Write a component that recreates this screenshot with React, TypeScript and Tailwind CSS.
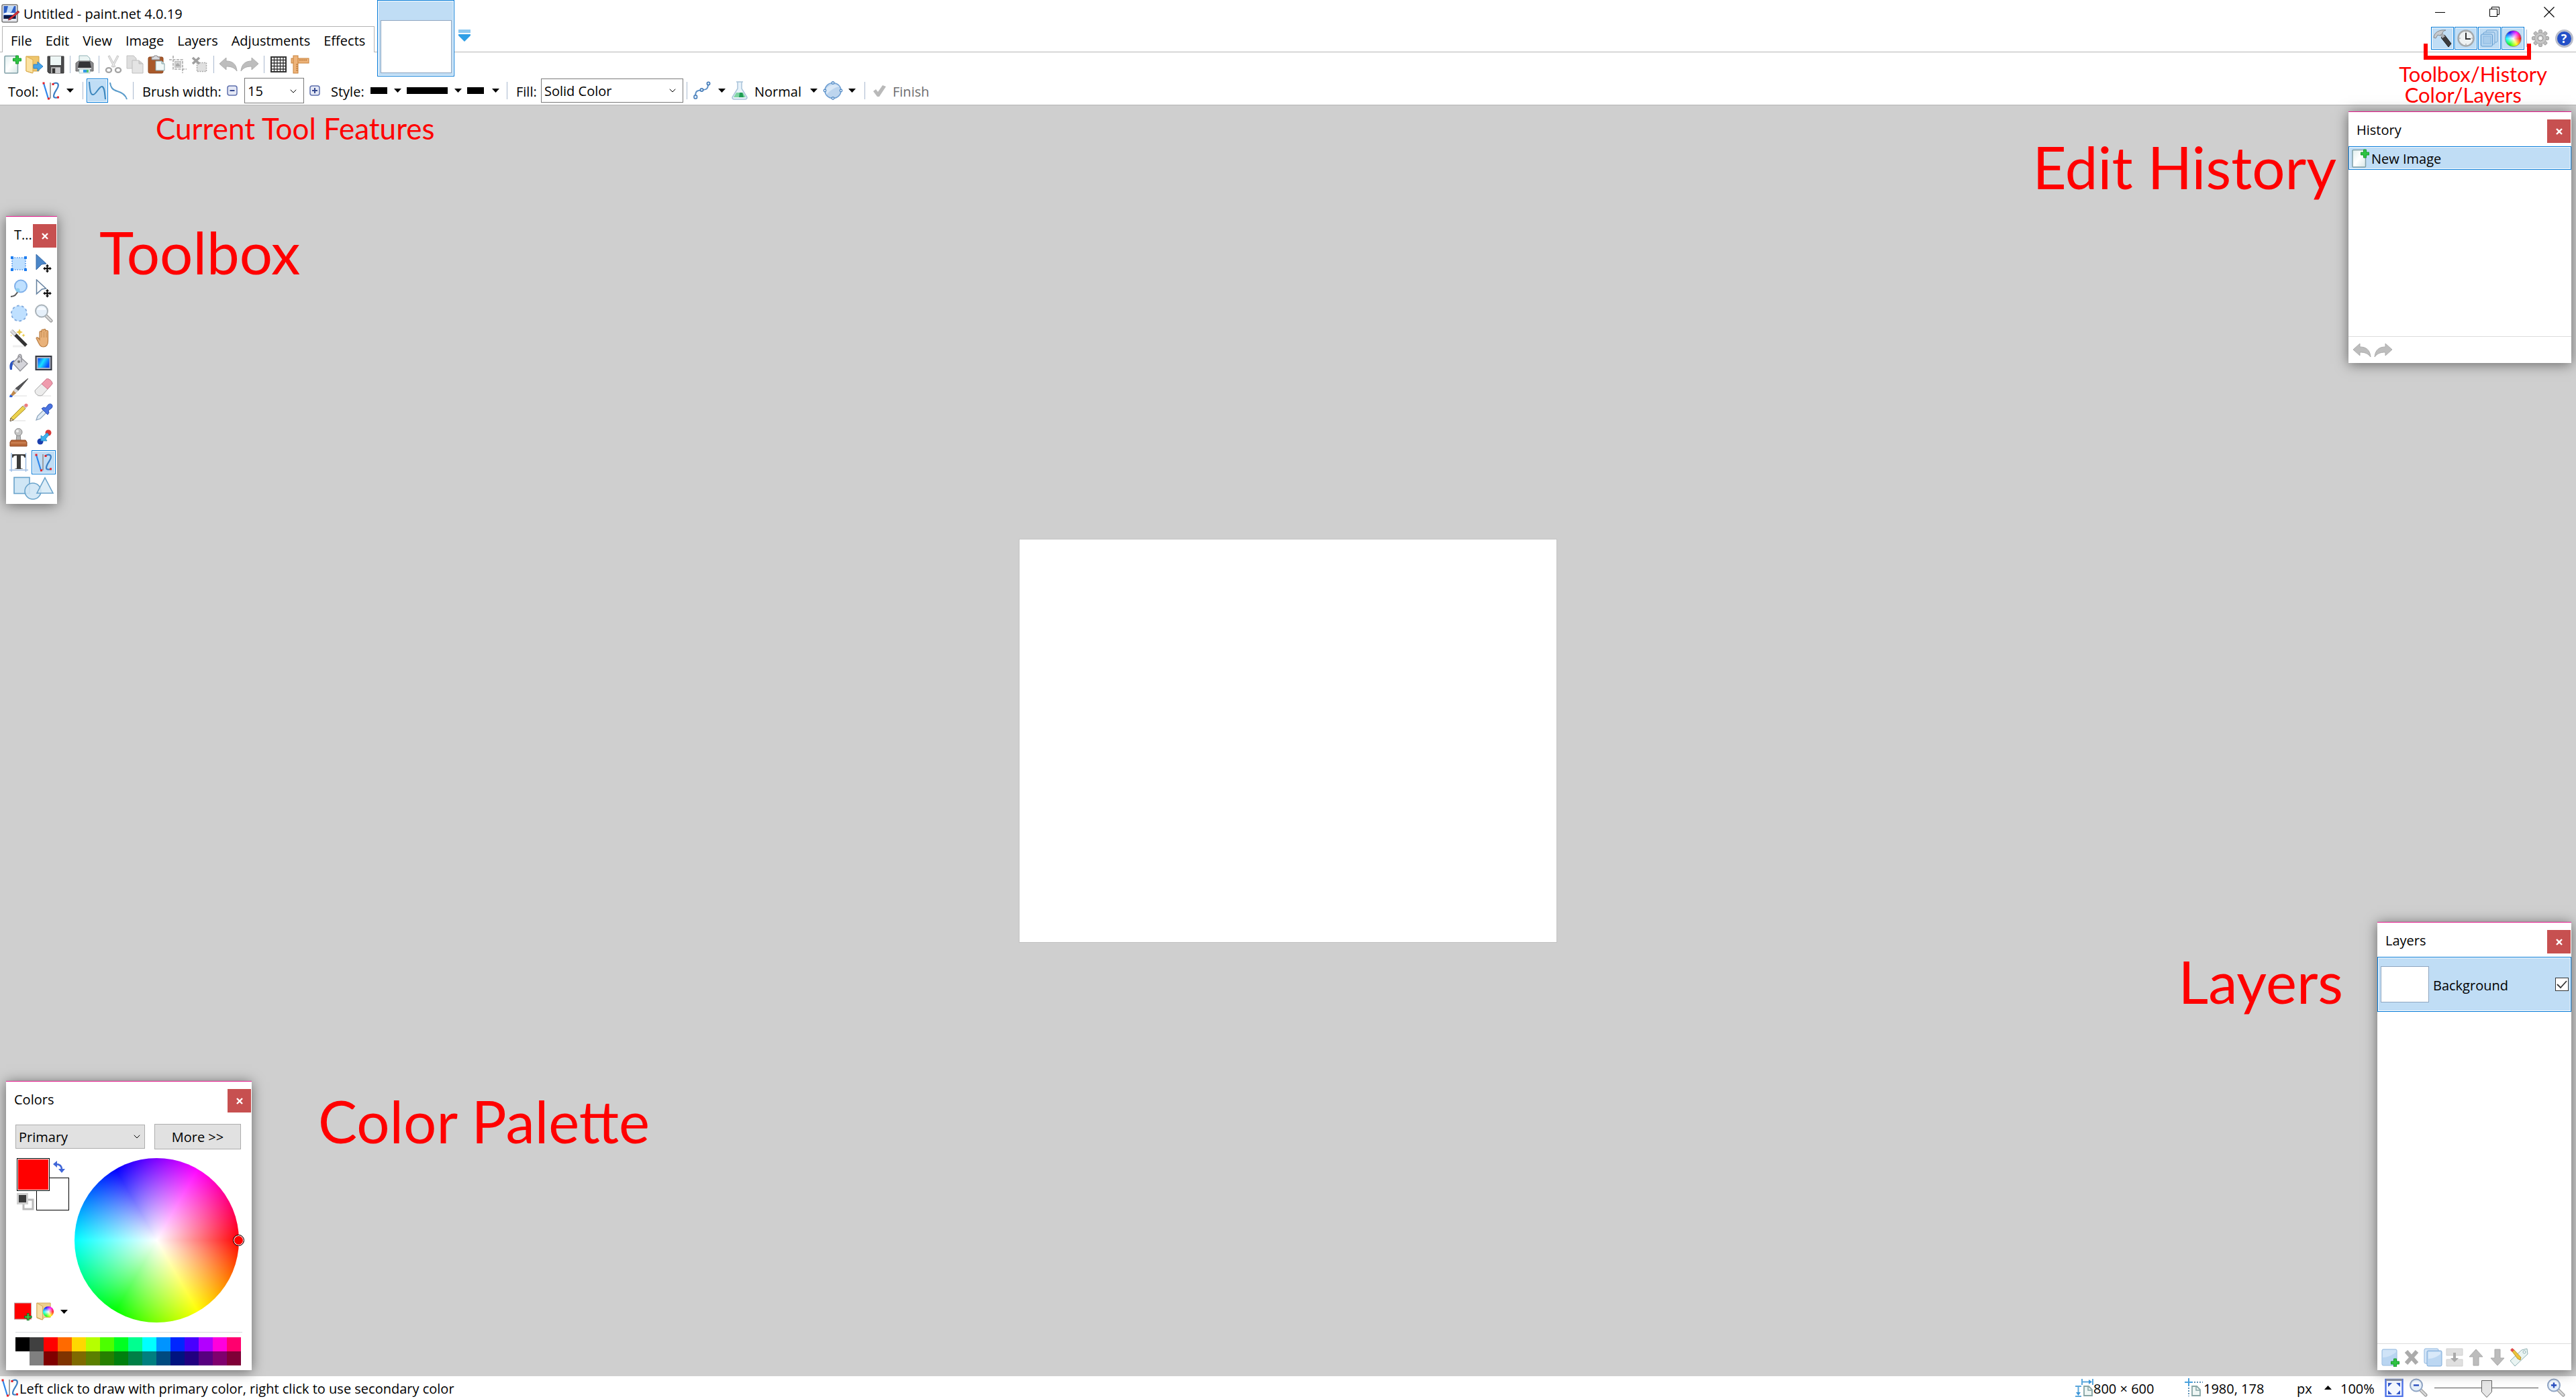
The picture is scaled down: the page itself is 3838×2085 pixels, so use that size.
import type { ReactNode } from 'react';
import { ChevronDown } from 'lucide-react';

/* ---------- icon helpers ---------- */

type IconProps = { children: ReactNode; className?: string; box?: string };

function Svg({ children, className = 'size-7', box = '0 0 28 28' }: IconProps) {
  return (
    <svg viewBox={box} className={`${className} shrink-0`} fill="none" aria-hidden="true">
      {children}
    </svg>
  );
}

const plus = (x: number, y: number) => (
  <path
    d={`M${x - 2} ${y - 6}h4v4h4v4h-4v4h-4v-4h-4v-4h4z`}
    fill="#2fc443"
    stroke="#179a2c"
    strokeWidth="1"
  />
);

const NewIcon = () => (
  <Svg>
    <defs>
      <linearGradient id="page" x1="0" y1="0" x2="1" y2="1">
        <stop offset="0" stopColor="#dfeeee" />
        <stop offset="0.5" stopColor="#fff" />
        <stop offset="1" stopColor="#d6e6e6" />
      </linearGradient>
    </defs>
    <rect x="2" y="1.500" width="19.500" height="25.500" rx="1" fill="url(#page)" stroke="#7f9fa6" strokeWidth="1.500" />
    {plus(20.5, 7)}
  </Svg>
);

const OpenIcon = () => (
  <Svg>
    <path d="M2 2h19v22h-9l-1 3-9-3z" fill="#efc66d" stroke="#d3a13f" />
    <path d="M2 2l10 5v20l-10-3z" fill="#fbe2a2" stroke="#d9ab4d" />
    <path d="M13 14h6v-4l8 7-8 7v-4h-6z" fill="#46a4ea" stroke="#2b7fc6" />
  </Svg>
);

const SaveIcon = () => (
  <Svg>
    <path d="M2 2h24v25H4l-2-2z" fill="#4a4a4c" stroke="#333" />
    <rect x="6" y="2" width="16" height="13" fill="#edf6f5" />
    <path d="M7 18h14v9H7z" fill="#aaa" />
    <rect x="9" y="20" width="4" height="7" fill="#333" />
    <rect x="14" y="19" width="7" height="8" fill="#c9c9cb" />
  </Svg>
);

const PrintIcon = () => (
  <Svg>
    <path d="M6 10V1h12l4 4v6z" fill="#eaf4f3" stroke="#8fb0b4" />
    <path d="M1 12l4-3h18l4 3v12H1z" fill="#8b8b8e" stroke="#666" />
    <path d="M6 10h16l2 9H4z" fill="#333336" />
    <rect x="4" y="19" width="20" height="2" fill="#d8d8da" />
    <path d="M6 21h16v6H6z" fill="#eef6f6" stroke="#9bb" strokeWidth="0.700" />
    <path d="M12 22h5v4h-5z" fill="#3498e8" />
    <path d="M17 22h3v4h-3z" fill="#58c470" />
  </Svg>
);

const CutIcon = () => (
  <Svg>
    <path d="M7 1l9 17M21 1l-9 17" stroke="#c9c9c9" strokeWidth="3.400" />
    <path d="M7.500 2l8 15M20.500 2l-8 15" stroke="#e9e9e9" strokeWidth="1.400" />
    <ellipse cx="7" cy="22.500" rx="4" ry="3.400" stroke="#a3a3a3" strokeWidth="2.400" />
    <ellipse cx="21" cy="22.500" rx="4" ry="3.400" stroke="#a3a3a3" strokeWidth="2.400" />
  </Svg>
);

const CopyIcon = () => (
  <Svg>
    <path d="M2 1h10l4 4v15H2z" fill="#dedede" stroke="#c2c2c2" />
    <path d="M10 8h10l6 5v14H10z" fill="#e4e4e4" stroke="#bebebe" />
    <path d="M20 8v5h6" fill="#cfcfcf" stroke="#bebebe" />
  </Svg>
);

const PasteIcon = () => (
  <Svg>
    <rect x="2" y="3" width="22" height="24" rx="2" fill="#a9592a" stroke="#8a441c" />
    <path d="M7 7V3h3l1-2h4l1 2h3v4z" fill="#d9d9dc" stroke="#86868a" />
    <path d="M13 9h9l4 4v10H13z" fill="#f0f8f7" stroke="#83a3a8" />
    <path d="M22 9v4h4" fill="#cfe0e0" stroke="#83a3a8" />
  </Svg>
);

const CropIcon = () => (
  <Svg>
    <path d="M7 1v20h20M1 7h20v20" stroke="#a8a8a8" strokeWidth="1.600" strokeDasharray="4 1.500" />
    <rect x="9.500" y="9.500" width="9" height="9" fill="#d2d2d2" stroke="#bbb" />
    <path d="M11 17v-3l3-2 3 3v2z" fill="#aaa" />
  </Svg>
);

const DeselectIcon = () => (
  <Svg>
    <rect x="10.500" y="11.500" width="14" height="13" fill="#e0e0e0" stroke="#a8a8a8" strokeWidth="1.500" strokeDasharray="2 1.500" />
    <path d="M4 4l10 9M14 4L4 13" stroke="#9f9f9f" strokeWidth="3.600" />
  </Svg>
);

const UndoIcon = () => (
  <Svg>
    <path d="M1 13L11 4v5c9 0 15 4 16 15-4-5-8-7-16-7v5z" fill="#bdbdbd" stroke="#adadad" />
  </Svg>
);

const RedoIcon = () => (
  <Svg>
    <path d="M27 13L17 4v5C8 9 2 13 1 24c4-5 8-7 16-7v5z" fill="#bdbdbd" stroke="#adadad" />
  </Svg>
);

const GridIcon = () => (
  <Svg>
    <rect x="3" y="3" width="22" height="22" fill="#fff" stroke="#333" strokeWidth="2" />
    <path d="M7.500 3v22M12 3v22M16.500 3v22M21 3v22M3 7.500h22M3 12h22M3 16.500h22M3 21h22" stroke="#333" strokeWidth="1.300" />
  </Svg>
);

const RulerIcon = () => (
  <Svg>
    <rect x="1" y="5" width="26" height="7" fill="#eeb47a" stroke="#c7813b" />
    <rect x="4" y="1" width="7" height="26" fill="#eeb47a" stroke="#c7813b" />
    <path d="M14 6v3M17 6v3M20 6v3M23 6v3M8 14h3M8 17h3M8 20h3M8 23h3" stroke="#b06a28" />
  </Svg>
);

const LineToolIcon = () => (
  <Svg>
    <path d="M3 3l7 23" stroke="#2f86ea" strokeWidth="2.200" />
    <path d="M13 2v24" stroke="#999" strokeWidth="1.800" />
    <path d="M17 4c5-3 9-1 7.500 4-1 4-6 8-6.500 14 0 3 3 3 7 2" stroke="#3b7fc4" strokeWidth="2.200" />
    <path d="M1.500 1.500h3v3h-3zM9 24.500h3v3H9zM15.500 3h3v3h-3zM23 22.500h3v3h-3z" fill="#e8222a" />
  </Svg>
);

const SplineIcon = () => (
  <Svg>
    <path d="M2 1C3 14 4 21 8 20c4 0 9-13 13-12 4 1 4 10 5 19" stroke="#3b86bd" strokeWidth="2" />
  </Svg>
);

const BezierIcon = () => (
  <Svg>
    <path d="M1 2c1 8 4 11 11 13s12 5 14 12" stroke="#5b9ccb" strokeWidth="2" />
  </Svg>
);

const MinusBoxIcon = () => (
  <Svg className="size-4" box="0 0 16 16">
    <rect x="1" y="1" width="14" height="14" rx="3" fill="#e4e8f5" stroke="#5f70ad" strokeWidth="1.500" />
    <path d="M4.500 8h7" stroke="#34488f" strokeWidth="2" />
  </Svg>
);

const PlusBoxIcon = () => (
  <Svg className="size-4" box="0 0 16 16">
    <rect x="1" y="1" width="14" height="14" rx="3" fill="#e4e8f5" stroke="#5f70ad" strokeWidth="1.500" />
    <path d="M4 8h8M8 4v8" stroke="#34488f" strokeWidth="2" />
  </Svg>
);

const CurveTypeIcon = () => (
  <Svg>
    <path d="M4 23c0-9 3-9 9-10 8 0 10-2 10-9" stroke="#5b8fc6" strokeWidth="2" />
    <rect x="2" y="21" width="4.500" height="5" rx="1.500" fill="#dcebfa" stroke="#3e76b4" strokeWidth="1.500" />
    <circle cx="13.500" cy="13" r="2.200" fill="#dcebfa" stroke="#3e76b4" strokeWidth="1.500" />
    <circle cx="23.500" cy="3.500" r="2.200" fill="#dcebfa" stroke="#3e76b4" strokeWidth="1.500" />
  </Svg>
);

const FlaskIcon = () => (
  <Svg>
    <path d="M9 1h10M11 1v10L3 24c0 2 1 3 3 3h16c2 0 3-1 3-3l-8-13V1" fill="#e8f2fa" stroke="#a9c4da" strokeWidth="1.500" />
    <path d="M9 17h10l4 7H5z" fill="#7fd4a2" />
    <path d="M14 17h4l2 7h-7z" fill="#1f9d55" />
  </Svg>
);

const SelectionShapeIcon = () => (
  <Svg className="h-7 w-[30px]" box="0 0 30 28">
    <ellipse cx="15" cy="14" rx="12" ry="11.500" fill="#bdd5ee" stroke="#6f9fd2" strokeWidth="1.600" />
    <path d="M5 11c4-6 14-8 20-3-6 0-14 6-20 12z" fill="#d9e8f7" />
    {[[15, 2.5], [27, 14], [15, 25.5], [3, 14]].map(([x, y]) => (
      <circle key={`${x}-${y}`} cx={x} cy={y} r="1.800" fill="#e6f1fb" stroke="#4d86c2" strokeWidth="1.200" />
    ))}
  </Svg>
);

const CheckIcon = () => (
  <Svg className="size-6" box="0 0 24 24">
    <path d="M3 13l4-3 3 4 7-10 5 2-10 15h-3z" fill="#b9b9b9" />
  </Svg>
);

const Caret = ({ up = false }: { up?: boolean }) => (
  <Svg className="h-[6px] w-[11px]" box="0 0 11 6">
    <path d={up ? 'M0 6h11L5.500 0z' : 'M0 0h11L5.500 6z'} fill="#000" />
  </Svg>
);

const HammerIcon = () => (
  <Svg>
    <path d="M12 13l5-4 10 13-4 5z" fill="#3c3c3f" stroke="#222" />
    <path d="M8 7l6-1 4 5-4 3z" fill="#a9adb2" />
    <path d="M1 13c1-8 8-12 18-11-3 1-5 2-5 5l-4 3-3-1-3 5-3-1z" fill="#c7cace" stroke="#83888e" />
  </Svg>
);

const ClockIcon = () => (
  <Svg>
    <circle cx="14" cy="14" r="11.500" fill="#eef1f2" stroke="#a4a9ac" strokeWidth="2.400" />
    <path d="M14 6v9h7" stroke="#333" strokeWidth="2" />
    <path d="M14 4.500v1M14 22.500v1M4.500 14h1M22.500 14h1" stroke="#777" strokeWidth="1.500" />
  </Svg>
);

const LayersIcon = () => (
  <Svg>
    <rect x="9" y="2" width="17" height="18" rx="2" fill="#bcd9f2" stroke="#72a7d6" />
    <rect x="5" y="5" width="17" height="18" rx="2" fill="#bcd9f2" stroke="#72a7d6" />
    <rect x="1.500" y="8" width="17" height="18" rx="2" fill="#b5d5f0" stroke="#5f9bd0" />
    <rect x="5" y="11" width="11" height="11" fill="#a9cdec" stroke="#8ab9e2" />
  </Svg>
);

const GearIcon = () => (
  <Svg>
    {[0, 45, 90, 135].map((a) => (
      <rect key={a} x="11.500" y="1.500" width="5" height="25" rx="1.500" fill="#bdbdbd" stroke="#909090" strokeWidth="0.800" transform={`rotate(${a} 14 14)`} />
    ))}
    <circle cx="14" cy="14" r="8.500" fill="#c6c6c6" stroke="#a2a2a2" strokeWidth="0.800" />
    <circle cx="14" cy="14" r="4" fill="#e4e4e4" stroke="#8c8c8c" />
    <circle cx="14" cy="14" r="1.600" fill="#fff" />
  </Svg>
);

const AppIcon = () => (
  <Svg>
    <rect x="1" y="1" width="23" height="26" rx="2" fill="#e6e8ee" stroke="#777" strokeWidth="1.500" />
    <rect x="3.500" y="3" width="18" height="19" fill="#2e5fc4" />
    <path d="M10 3h9l-4 9-8 3z" fill="#bcd8f8" />
    <path d="M3.500 14c5-3 12 0 18-1v3h-18z" fill="#fff" />
    <path d="M3.500 17h18v5h-18z" fill="#0e1a44" />
    <path d="M25 10l2 2-13 11-4 1 2-3z" fill="#d9303a" stroke="#6b1519" strokeWidth="0.700" />
  </Svg>
);

/* toolbox */

const RectSelectIcon = () => (
  <Svg>
    <rect x="4" y="5" width="20" height="18" fill="#bfe0ff" stroke="#4a8fe8" strokeWidth="1.600" strokeDasharray="1.500 2" />
    <path d="M2 3h4v4H2zM22 3h4v4h-4zM2 21h4v4H2zM22 21h4v4h-4z" fill="#1d7df0" />
  </Svg>
);

const moveCross = (
  <path
    d="M19 13l3.500 4h-2v3h3v-2l4 3.500-4 3.500v-2h-3v3h2L19 30l-3.500-4h2v-3h-3v2l-4-3.500 4-3.500v2h3v-3h-2z"
    transform="translate(5.250 5) scale(0.750)"
    fill="#111"
  />
);

const MovePixelsIcon = () => (
  <Svg>
    <path d="M3 0l15 14-7 1-8 8z" fill="#4b86c8" stroke="#3569a8" />
    {moveCross}
  </Svg>
);

const MoveSelectionIcon = () => (
  <Svg>
    <path d="M3.500 1l14 13-6 1-8 7z" fill="#fff" stroke="#64809f" strokeWidth="1.500" />
    {moveCross}
  </Svg>
);

const LassoIcon = () => (
  <Svg>
    <ellipse cx="17" cy="10.500" rx="9" ry="9" fill="#bfe0ff" stroke="#7fb0ea" strokeWidth="2" />
    <path d="M13 17c-2 6-6 9-11 9" stroke="#555" strokeWidth="2" />
    <circle cx="12.500" cy="16.500" r="3" fill="#8ccdee" />
  </Svg>
);

const EllipseSelectIcon = () => (
  <Svg>
    <circle cx="14.500" cy="14" r="11.500" fill="#bfe0ff" stroke="#7fa9dd" strokeWidth="1.800" strokeDasharray="3.500 3.700" />
  </Svg>
);

const Magnifier = ({ mark, color = '#a9b2b8' }: { mark?: string; color?: string }) => (
  <Svg>
    <path d="M17 17l8 8" stroke="#999" strokeWidth="5" strokeLinecap="round" />
    <path d="M17 17l8 8" stroke="#d8d8d8" strokeWidth="2.500" strokeLinecap="round" />
    <circle cx="11" cy="10.500" r="9" fill="#e6f0fa" stroke={color} strokeWidth="2" />
    <path d="M4 9c2-6 12-6 14 0z" fill="#f7fbff" />
    {mark && <path d={mark} stroke="#2a50c0" strokeWidth="2.400" />}
  </Svg>
);

const ZoomToolIcon = () => <Magnifier />;

const WandIcon = () => (
  <Svg>
    <path d="M5 26h20" stroke="#eee" strokeWidth="3" />
    <path d="M3 3L25 25" stroke="#333" strokeWidth="5" />
    <path d="M2.500 2.500l6.500 6.500" stroke="#ddd" strokeWidth="4.500" />
    <path d="M15 0l1.500 3.500L20 5l-3.500 1.500L15 10l-1.500-3.500L10 5l3.500-1.500zM21 7l.8 2 2 .8-2 .8-.8 2-.8-2-2-.8 2-.8zM2 8l.6 1.400L4 10l-1.400.6L2 12z" fill="#e8c846" />
  </Svg>
);

const HandIcon = () => (
  <Svg>
    <path d="M3 14c1-2 3-1 5 2V5c0-2 3-2 3 0V2.500c0-2 3-2 3 0V2c0-2 3-2 3 0v2c0-2 3.500-2 3.500 0v14c0 6-3 9-7 9-5 0-6-4-10.500-13z" fill="#e9b27a" stroke="#b97d43" strokeWidth="1.200" />
    <path d="M11 5v8M14.500 4v9M18 5v8" stroke="#c68b50" />
  </Svg>
);

const BucketIcon = () => (
  <Svg>
    <path d="M1 24c-2-8 1-13 6-14l2 3c-4 1-5 5-5 11z" fill="#2b53c0" />
    <path d="M15 4l12 11-11 11L5 14z" fill="#d4d4da" stroke="#909096" strokeWidth="1.300" />
    <path d="M13 6c0-6 5-6 5 0v7" stroke="#9a9aa0" strokeWidth="1.800" />
    <circle cx="14" cy="12" r="2" fill="#777" />
  </Svg>
);

const GradientIcon = () => (
  <Svg>
    <defs>
      <linearGradient id="grad" x1="0" y1="0" x2="1" y2="0.500">
        <stop offset="0" stopColor="#0a3cff" />
        <stop offset="0.500" stopColor="#19e0ff" />
        <stop offset="1" stopColor="#0a50ff" />
      </linearGradient>
    </defs>
    <rect x="2.500" y="4" width="23" height="20" fill="#a8b0c8" stroke="#33363f" strokeWidth="2" />
    <rect x="5.500" y="7" width="17" height="14" fill="url(#grad)" />
  </Svg>
);

const BrushIcon = () => (
  <Svg>
    <path d="M6 26h20" stroke="#eee" strokeWidth="2" />
    <path d="M28 0L13 18l-4-3z" fill="#55565a" stroke="#444" />
    <path d="M9 15l4 3-4 4-3-3z" fill="#d9dadd" stroke="#999" strokeWidth="0.600" />
    <path d="M6 18l4 4-5 4H1z" fill="#c08a4e" />
    <path d="M1 24l4 2-1 2H0z" fill="#2d62d8" />
  </Svg>
);

const EraserIcon = () => (
  <Svg>
    <path d="M5 26h20" stroke="#eee" strokeWidth="2" />
    <path d="M1 18L18 1c3-2 9 3 9 7L12 25c-4 2-11 0-11-7z" fill="#ececec" stroke="#aaa" />
    <path d="M11 8l7-7c3-2 9 3 9 7l-7 8z" fill="#ef9bad" stroke="#d3778d" />
  </Svg>
);

const PencilIcon = () => (
  <Svg>
    <path d="M6 26h18" stroke="#eee" strokeWidth="2" />
    <path d="M2 22L20 4l4 4L6 25l-5 1z" fill="#ecd24e" stroke="#a48a22" />
    <path d="M2 22l4 3-5 2z" fill="#e6c79b" stroke="#333" strokeWidth="0.600" />
    <path d="M20 4l2-2 4 4-2 2z" fill="#ccc" />
    <circle cx="25" cy="3" r="2.600" fill="#ee7c80" />
  </Svg>
);

const PickerIcon = () => (
  <Svg>
    <path d="M3 25L5 19 14 10l4 4-9 9z" fill="#dfeaf5" stroke="#8ea6bd" strokeWidth="1.300" />
    <path d="M11 8l3-2 3 1 4-5c4-3 8 1 5 5l-5 4 1 3-2 3z" fill="#4a73e0" stroke="#2c4fb4" />
  </Svg>
);

const StampIcon = () => (
  <Svg>
    <path d="M11 10h5l1 9h-7z" fill="#b5b5b5" stroke="#888" />
    <circle cx="13.500" cy="6" r="5.500" fill="#c4c4c4" stroke="#8c8c8c" />
    <circle cx="12" cy="4.500" r="2" fill="#eee" />
    <path d="M3 18h21l2 3v6H1v-6z" fill="#b8683a" stroke="#8d4620" />
    <path d="M2 22h23" stroke="#dc9a6c" />
  </Svg>
);

const RecolorIcon = () => (
  <Svg>
    <circle cx="21" cy="7" r="4.500" fill="#d93a3a" />
    <circle cx="9" cy="20" r="4.500" fill="#1a3fae" />
    <path d="M19 7l3 3-5 6 2 3H10v-8l3 2z" fill="#3fb1ec" stroke="#1f86c4" strokeWidth="0.800" />
  </Svg>
);

const TextIcon = () => (
  <Svg>
    <path d="M3 0v28M24.500 0v28M0 25.500h28" stroke="#9cbce4" strokeWidth="1.500" />
    <path d="M4 2h20v5h-1.500c-.5-2-1.500-3-4-3H17v18c0 1 1 1.500 3 1.500V24H8v-.5c2 0 3-.5 3-1.500V4H9.500c-2.500 0-3.500 1-4 3H4z" fill="#3b3b3b" />
  </Svg>
);

const ShapesIcon = () => (
  <Svg className="h-9 w-[62px]" box="0 0 62 36">
    <rect x="2" y="1.500" width="23" height="24" fill="#cfe6f5" stroke="#69a3cb" strokeWidth="1.600" />
    <circle cx="30" cy="22" r="12" fill="#cfe6f5" fillOpacity="0.900" stroke="#69a3cb" strokeWidth="1.600" />
    <path d="M48 2l12 23H36z" fill="#d6eaf6" fillOpacity="0.850" stroke="#69a3cb" strokeWidth="1.600" />
  </Svg>
);

/* layers footer */

const AddLayerIcon = () => (
  <Svg>
    <rect x="2" y="2" width="22" height="24" rx="2" fill="#cfe3f7" stroke="#8db5dd" />
    <path d="M3 14c7 0 14-3 20-8v19H3z" fill="#b9d5f1" />
    {plus(21.5, 22)}
  </Svg>
);
const DeleteIcon = () => (
  <Svg>
    <path d="M6 5l16 18M22 5L6 23" stroke="#ababab" strokeWidth="6" />
  </Svg>
);
const DuplicateIcon = () => (
  <Svg>
    <rect x="1" y="1" width="21" height="22" rx="2" fill="#d5e6f8" stroke="#8db5dd" />
    <rect x="5" y="4" width="22" height="23" rx="2" fill="#bcd7f2" stroke="#7caad8" />
    <path d="M7 16c7 0 13-3 18-7v-3H7z" fill="#d9e9f9" />
  </Svg>
);
const MergeIcon = () => (
  <Svg>
    <path d="M2 1h24v10H2zM2 17h24v10H2z" fill="#e0e0e0" stroke="#cfcfcf" />
    <path d="M12 7h4v8h4l-6 6-6-6h4z" fill="#aaa" />
  </Svg>
);
const UpIcon = () => (
  <Svg>
    <path d="M14 2l10 11h-6v13h-8V13H4z" fill="#bcbcbc" stroke="#a8a8a8" />
  </Svg>
);
const DownIcon = () => (
  <Svg>
    <path d="M14 26l10-11h-6V2h-8v13H4z" fill="#bcbcbc" stroke="#a8a8a8" />
  </Svg>
);
const PropsIcon = () => (
  <Svg>
    <path d="M18 3l8-2 1 8L8 27l-7-8z" fill="#e9f4f2" stroke="#8fb0b4" />
    <circle cx="22" cy="6" r="2" fill="#fff" stroke="#8fb0b4" />
    <path d="M3 4l3-2 11 12-1 4-4-2z" fill="#edc43c" stroke="#a8851c" strokeWidth="0.800" />
    <path d="M1 3l3-3 3 3-3 3z" fill="#e24b4b" />
  </Svg>
);

/* status bar */

const SizeIcon = () => (
  <Svg>
    <path d="M11 1v9M27 1v9M12 5.500h11M1 12h9M1 27h9M5.500 13v10" stroke="#5ba7dc" strokeWidth="2" />
    <path d="M21 2l5 3.500-5 3.500zM2 21l3.500 5L9 21z" fill="#3d96d8" />
    <path d="M14 12h7l5 5v9H14z" fill="#eef6f4" stroke="#86a5a5" strokeWidth="1.800" />
    <path d="M20 12v6h6" stroke="#86a5a5" strokeWidth="1.500" />
  </Svg>
);
const PositionIcon = () => (
  <Svg>
    <path d="M6 0v12M0 6h12" stroke="#4aa0dc" strokeWidth="2" />
    <path d="M6 14v13M14 6h13" stroke="#5b8fb4" strokeWidth="2" strokeDasharray="2 2" />
    <path d="M11 12h7l5 5v9H11z" fill="#eef6f4" stroke="#86a5a5" strokeWidth="1.800" />
    <path d="M17 12v6h6" stroke="#86a5a5" strokeWidth="1.500" />
  </Svg>
);
const FitIcon = () => (
  <Svg>
    <rect x="1.500" y="2" width="25" height="25" fill="#f5f8ff" stroke="#4d72e8" strokeWidth="2.400" />
    <path d="M2 2.500h24" stroke="#8a93a8" strokeWidth="3" />
    <path d="M5 7h6l-6 6zM23 7v6l-6-6zM5 24v-6l6 6zM23 24h-6l6-6z" fill="#3358c8" />
  </Svg>
);

/* ---------- shared pieces ---------- */

const Sep = () => <span className="mx-[5px] h-[26px] w-px shrink-0 bg-[#a9b9cf]" />;

function IconButton({ label, children, className = 'h-9 w-8' }: { label: string; children: ReactNode; className?: string }) {
  return (
    <button type="button" aria-label={label} className={`flex shrink-0 items-center justify-center ${className}`}>
      {children}
    </button>
  );
}

function Panel({ title, label = title, className, children }: { title: string; label?: string; className: string; children: ReactNode }) {
  return (
    <section
      aria-label={label}
      className={`absolute z-10 flex flex-col border-t border-[#e3198b] bg-white shadow-[0_2px_18px_rgba(0,0,0,0.5)] ${className}`}
    >
      <header className="flex h-[51px] shrink-0 items-start justify-between pt-[11px] pr-px pl-3">
        <h2 className="leading-8 whitespace-nowrap">{title}</h2>
        <button
          type="button"
          aria-label={`Close ${label}`}
          className="flex size-[35px] shrink-0 items-center justify-center bg-[#c75050]"
        >
          <Svg className="size-[10px]" box="0 0 10 10">
            <path d="M1 1l8 8M9 1L1 9" stroke="#fff" strokeWidth="2.400" />
          </Svg>
        </button>
      </header>
      {children}
    </section>
  );
}

const selected = 'border border-[#0078d7] bg-[#c0ddf5] ring-1 ring-white ring-inset';

/* ---------- header ---------- */

const menus = ['File', 'Edit', 'View', 'Image', 'Layers', 'Adjustments', 'Effects'];

function Header() {
  return (
    <div className="relative shrink-0 border-b border-[#b4b4b4] bg-white">
      <div className="flex h-[39px] items-start">
        <div className="flex flex-1 items-center gap-[5px] pt-[5px] pl-[2px]">
          <AppIcon />
          <h1 className="pt-[2px]">Untitled - paint.net 4.0.19</h1>
        </div>
        <IconButton label="Minimize" className="h-9 w-[81px]">
          <Svg className="size-4" box="0 0 16 16">
            <path d="M0 8.500h15" stroke="#000" />
          </Svg>
        </IconButton>
        <IconButton label="Restore" className="h-9 w-[81px]">
          <Svg className="size-4" box="0 0 16 16">
            <path d="M0.500 3.500h11v11h-11zM3.500 3.500v-3h11v11h-3" stroke="#000" />
          </Svg>
        </IconButton>
        <IconButton label="Close" className="h-9 w-[81px]">
          <Svg className="size-4" box="0 0 16 16">
            <path d="M0.500 0.500l15 15M15.500 0.500l-15 15" stroke="#000" strokeWidth="1.200" />
          </Svg>
        </IconButton>
      </div>

      <div className="flex h-[39px]">
        <div className="w-[3px] border-b border-[#b4b4b4]" />
        <nav className="flex w-[555px] items-center gap-5 border-x border-t border-[#b4b4b4] pt-1 pl-3">
          {menus.map((m) => (
            <button key={m} type="button">
              {m}
            </button>
          ))}
        </nav>
        <div className="flex flex-1 items-start justify-end gap-px border-b border-[#b4b4b4] pt-px pr-px">
          <IconButton label="Tools window" className={`size-[34px] ${selected}`}><HammerIcon /></IconButton>
          <IconButton label="History window" className={`size-[34px] ${selected}`}><ClockIcon /></IconButton>
          <IconButton label="Layers window" className={`size-[34px] ${selected}`}><LayersIcon /></IconButton>
          <IconButton label="Colors window" className={`size-[34px] ${selected}`}>
            <span className="size-[25px] rounded-full border border-[#8d8d9d] bg-[radial-gradient(closest-side,white,transparent),conic-gradient(from_90deg,red,yellow,lime,cyan,blue,magenta,red)]" />
          </IconButton>
          <span className="mx-[2px] mt-1 h-[26px] w-px bg-[#a9b9cf]" />
          <IconButton label="Settings" className="size-[34px]"><GearIcon /></IconButton>
          <IconButton label="Help" className="size-[34px]">
            <span className="flex size-[27px] items-center justify-center rounded-full border-[3px] border-[#b9bdca] bg-[#2350c8] text-lg leading-none font-bold text-white">?</span>
          </IconButton>
        </div>
      </div>

      <div className="flex h-9 items-center pl-[3px]">
        <IconButton label="New"><NewIcon /></IconButton>
        <IconButton label="Open"><OpenIcon /></IconButton>
        <IconButton label="Save"><SaveIcon /></IconButton>
        <Sep />
        <IconButton label="Print"><PrintIcon /></IconButton>
        <Sep />
        <IconButton label="Cut"><CutIcon /></IconButton>
        <IconButton label="Copy"><CopyIcon /></IconButton>
        <IconButton label="Paste"><PasteIcon /></IconButton>
        <IconButton label="Crop to selection"><CropIcon /></IconButton>
        <IconButton label="Deselect"><DeselectIcon /></IconButton>
        <Sep />
        <IconButton label="Undo"><UndoIcon /></IconButton>
        <IconButton label="Redo"><RedoIcon /></IconButton>
        <Sep />
        <IconButton label="Pixel grid"><GridIcon /></IconButton>
        <IconButton label="Rulers"><RulerIcon /></IconButton>
      </div>

      <div className="flex h-[42px] items-center whitespace-nowrap">
        <span className="w-12 pt-[3px] pl-3">Tool:</span>
        <button type="button" aria-label="Choose tool" className="ml-[14px] flex h-9 w-14 items-center justify-between pr-2">
          <LineToolIcon />
          <Caret />
        </button>
        <Sep />
        <IconButton label="Spline" className={`h-9 w-8 ${selected}`}><SplineIcon /></IconButton>
        <IconButton label="Bezier"><BezierIcon /></IconButton>
        <Sep />
        <label htmlFor="brush" className="w-[134px] pt-[3px] pl-2">Brush width:</label>
        <button type="button" aria-label="Decrease brush width"><MinusBoxIcon /></button>
        <span className="relative mr-2 ml-[10px] w-[89px]">
          <select id="brush" className="block h-[38px] w-full appearance-none border border-[#7a7a7a] bg-white pt-[2px] pl-1">
            <option>15</option>
          </select>
          <ChevronDown className="pointer-events-none absolute top-3 right-2 size-4" strokeWidth={1.5} />
        </span>
        <button type="button" aria-label="Increase brush width"><PlusBoxIcon /></button>
        <span className="ml-4 w-[59px] pt-[3px]">Style:</span>
        <button type="button" aria-label="Start cap" className="flex h-9 w-[54px] items-center gap-[10px]">
          <span className="h-[10px] w-[25px] bg-black" />
          <Caret />
        </button>
        <button type="button" aria-label="Dash style" className="flex h-9 w-[90px] items-center gap-[10px]">
          <span className="h-[10px] w-[61px] bg-black" />
          <Caret />
        </button>
        <button type="button" aria-label="End cap" className="flex h-9 w-[54px] items-center gap-[12px]">
          <span className="h-[10px] w-[25px] bg-black" />
          <Caret />
        </button>
        <Sep />
        <label htmlFor="fill" className="w-[45px] pt-[3px] pl-2">Fill:</label>
        <span className="relative w-[212px]">
          <select id="fill" className="block h-9 w-full appearance-none border border-[#7a7a7a] bg-white pt-px pl-1">
            <option>Solid Color</option>
          </select>
          <ChevronDown className="pointer-events-none absolute top-[10px] right-2 size-4" strokeWidth={1.5} />
        </span>
        <Sep />
        <button type="button" aria-label="Curve type" className="ml-[3px] flex h-9 w-14 items-center gap-[10px]">
          <CurveTypeIcon />
          <Caret />
        </button>
        <button type="button" className="flex h-9 w-[138px] items-center gap-2">
          <FlaskIcon />
          <span className="flex-1 pt-[3px] text-left">Normal</span>
          <span className="flex pr-2"><Caret /></span>
        </button>
        <button type="button" aria-label="Selection mode" className="flex h-9 w-[57px] items-center gap-2">
          <SelectionShapeIcon />
          <Caret />
        </button>
        <Sep />
        <button type="button" className="ml-1 flex h-9 items-center gap-2 text-[#6d6d6d]">
          <CheckIcon />
          <span className="pt-[3px]">Finish</span>
        </button>
      </div>

      {/* open image tab, laid over the menu line */}
      <button
        type="button"
        aria-label="Untitled image"
        className={`absolute top-0 left-[562px] flex h-[114px] w-[115px] items-end justify-center pb-1 ${selected}`}
      >
        <span className="h-[79px] w-[106px] border border-[#8fa6c0] bg-white" />
      </button>
      <button type="button" aria-label="Image list" className="absolute top-11 left-[683px]">
        <Svg className="h-[18px] w-[18px]" box="0 0 18 18">
          <path d="M0 0h18v5H0z" fill="#8cc8f0" />
          <path d="M0 7h18v2l-9 9-9-9z" fill="#2f9fe6" />
        </Svg>
      </button>
    </div>
  );
}

/* ---------- floating windows ---------- */

const tools: [string, () => ReactNode][] = [
  ['Rectangle select', RectSelectIcon],
  ['Move selected pixels', MovePixelsIcon],
  ['Lasso select', LassoIcon],
  ['Move selection', MoveSelectionIcon],
  ['Ellipse select', EllipseSelectIcon],
  ['Zoom', ZoomToolIcon],
  ['Magic wand', WandIcon],
  ['Pan', HandIcon],
  ['Paint bucket', BucketIcon],
  ['Gradient', GradientIcon],
  ['Paintbrush', BrushIcon],
  ['Eraser', EraserIcon],
  ['Pencil', PencilIcon],
  ['Color picker', PickerIcon],
  ['Clone stamp', StampIcon],
  ['Recolor', RecolorIcon],
  ['Text', TextIcon],
  ['Line / Curve', LineToolIcon],
];

function ToolboxPanel() {
  return (
    <Panel title="T..." label="Tools" className="top-[165px] left-[9px] w-[76px] pb-[3px]">
      <div className="grid grid-cols-[37px_36px] gap-y-px pt-px pl-px">
        {tools.map(([name, Icon]) => (
          <IconButton key={name} label={name} className={name === 'Line / Curve' ? `size-9 ${selected}` : 'size-9'}>
            <Icon />
          </IconButton>
        ))}
      </div>
      <IconButton label="Shapes" className="mt-px ml-[10px] h-10 w-[62px]"><ShapesIcon /></IconButton>
    </Panel>
  );
}

const swatches = [
  'bg-[#000000]', 'bg-[#404040]', 'bg-[#ff0000]', 'bg-[#ff6a00]', 'bg-[#ffd800]', 'bg-[#b6ff00]', 'bg-[#4cff00]', 'bg-[#00ff21]',
  'bg-[#00ff90]', 'bg-[#00ffff]', 'bg-[#0094ff]', 'bg-[#0026ff]', 'bg-[#4800ff]', 'bg-[#b200ff]', 'bg-[#ff00dc]', 'bg-[#ff006e]',
  'bg-[#ffffff]', 'bg-[#808080]', 'bg-[#7f0000]', 'bg-[#7f3300]', 'bg-[#7f6a00]', 'bg-[#5b7f00]', 'bg-[#267f00]', 'bg-[#007f0e]',
  'bg-[#007f46]', 'bg-[#007f7f]', 'bg-[#004a7f]', 'bg-[#00137f]', 'bg-[#21007f]', 'bg-[#57007f]', 'bg-[#7f006e]', 'bg-[#7f0037]',
];

function ColorsPanel() {
  return (
    <Panel title="Colors" className="bottom-[9px] left-[9px] w-[366px] pb-[7px]">
      <div className="mt-3 flex items-center gap-[14px] px-[14px]">
        <span className="relative w-[193px]">
          <select aria-label="Active color" className="block h-9 w-full appearance-none border border-[#adadad] bg-[#e1e1e1] pt-[2px] pl-1">
            <option>Primary</option>
          </select>
          <ChevronDown className="pointer-events-none absolute top-[10px] right-1 size-4" strokeWidth={1.5} />
        </span>
        <button type="button" className="h-[38px] w-[129px] border border-[#adadad] bg-[#e1e1e1] pt-[2px]">
          More &gt;&gt;
        </button>
      </div>

      <div className="mt-[13px] flex h-[246px]">
        <div className="flex w-[102px] flex-col justify-between pl-4">
          <div className="relative h-[78px] w-[78px]">
            <button type="button" aria-label="Secondary color" className="absolute right-0 bottom-0 size-[49px] border border-black bg-white" />
            <button type="button" aria-label="Primary color" className="absolute top-0 left-0 size-[49px] border border-black bg-[#ff0000] ring-1 ring-white ring-inset" />
            <button type="button" aria-label="Swap colors" className="absolute top-1 right-[6px]">
              <Svg className="size-[18px]" box="0 0 18 18">
                <path d="M4 5c6 0 9 3 9 8" stroke="#4167d8" strokeWidth="2.600" />
                <path d="M0 5l6-5v10zM8 12h10l-5 6z" fill="#4167d8" />
              </Svg>
            </button>
            <button type="button" aria-label="Reset colors" className="absolute bottom-0 left-0">
              <Svg className="size-[26px]" box="0 0 26 26">
                <rect x="10" y="10" width="14" height="14" fill="#fff" stroke="#bbb" strokeWidth="3" />
                <rect x="1.500" y="1.500" width="14" height="14" fill="#3a3a3a" stroke="#cfcfcf" strokeWidth="3" />
              </Svg>
            </button>
          </div>
          <div className="-ml-1 flex items-center gap-[5px] pb-1">
            <button type="button" aria-label="Add color to palette">
              <Svg className="size-[27px]" box="0 0 28 28">
                <rect x="0.500" y="1" width="26" height="25" fill="#ff0000" stroke="#b9a5a5" />
                <path d="M20 17h3v4h4v3h-4v4h-3v-4h-4v-3h4z" fill="#3fbe4b" stroke="#0b6b1a" />
              </Svg>
            </button>
            <button type="button" aria-label="Palettes" className="flex items-center gap-[10px]">
              <span className="relative block">
                <Svg className="size-[27px]">
                  <path d="M2 1h21v22h-9l-4 4-8-3z" fill="#edcf8b" stroke="#d2a859" />
                  <path d="M2 1l9 5v21l-9-4z" fill="#f7dfa5" stroke="#d2a859" />
                </Svg>
                <span className="absolute top-[6px] right-0 size-4 rounded-full bg-[radial-gradient(closest-side,white,transparent),conic-gradient(from_90deg,red,yellow,lime,cyan,blue,magenta,red)]" />
              </span>
              <Caret />
            </button>
          </div>
        </div>
        <div className="relative size-[245px] shrink-0 rounded-full bg-[radial-gradient(closest-side,white,transparent),conic-gradient(from_90deg,red,yellow,lime,cyan,blue,magenta,red)]">
          <span className="absolute top-[114px] -right-2 size-[17px] rounded-full border border-black bg-[#ff0000] ring-1 ring-white ring-inset" />
        </div>
      </div>

      <hr className="mx-[14px] mt-[13px] border-[#d7dade]" />
      <div className="mx-[14px] mt-[7px] grid w-[336px] grid-cols-16">
        {swatches.map((c) => (
          <button key={c} type="button" aria-label={`Palette ${c.slice(4, 11)}`} className={`h-[21px] ${c}`} />
        ))}
      </div>
    </Panel>
  );
}

function HistoryPanel() {
  return (
    <Panel title="History" className="top-[9px] right-[7px] h-[375px] w-[332px]">
      <button type="button" className={`flex h-[35px] shrink-0 items-center gap-[2px] pl-[3px] ${selected}`}>
        <NewIcon />
        <span className="pt-[2px]">New Image</span>
      </button>
      <div className="flex-1" />
      <footer className="flex h-10 items-center border-t border-[#dcdcdc] pl-1">
        <IconButton label="Undo step"><UndoIcon /></IconButton>
        <IconButton label="Redo step"><RedoIcon /></IconButton>
      </footer>
    </Panel>
  );
}

function LayersPanel() {
  return (
    <Panel title="Layers" className="right-[7px] bottom-[9px] h-[668px] w-[289px]">
      <div className={`flex h-[82px] shrink-0 items-center pr-[3px] pl-1 ${selected}`}>
        <span className="h-[54px] w-[72px] border border-[#8fa6c0] bg-white" />
        <label htmlFor="visible" className="flex-1 pt-[3px] pl-[6px]">Background</label>
        <span className="relative size-5">
          <input id="visible" type="checkbox" defaultChecked className="block size-5 appearance-none border border-[#333] bg-white" />
          <Svg className="pointer-events-none absolute inset-0 size-5" box="0 0 20 20">
            <path d="M3 10l5 5 9-10" stroke="#333" strokeWidth="1.800" />
          </Svg>
        </span>
      </div>
      <div className="flex-1" />
      <footer className="flex h-10 items-center border-t border-[#dcdcdc] pt-px pl-[3px]">
        <IconButton label="Add layer"><AddLayerIcon /></IconButton>
        <IconButton label="Delete layer"><DeleteIcon /></IconButton>
        <IconButton label="Duplicate layer"><DuplicateIcon /></IconButton>
        <IconButton label="Merge layer down"><MergeIcon /></IconButton>
        <IconButton label="Move layer up"><UpIcon /></IconButton>
        <IconButton label="Move layer down"><DownIcon /></IconButton>
        <IconButton label="Layer properties"><PropsIcon /></IconButton>
      </footer>
    </Panel>
  );
}

/* ---------- status bar ---------- */

function StatusBar() {
  return (
    <footer className="flex h-[34px] shrink-0 items-center bg-white pr-4 pl-px whitespace-nowrap">
      <LineToolIcon />
      <span className="flex-1 pt-[3px]">Left click to draw with primary color, right click to use secondary color</span>
      <span className="flex w-[164px] items-center">
        <SizeIcon />
        <span className="pt-[3px]">800 × 600</span>
      </span>
      <span className="flex w-[167px] items-center">
        <PositionIcon />
        <span className="pt-[3px]">1980, 178</span>
      </span>
      <button type="button" className="flex w-[65px] items-center gap-[18px]">
        <span className="pt-[3px]">px</span>
        <Caret up />
      </button>
      <span className="w-[66px] pt-[3px]">100%</span>
      <IconButton label="Fit to window" className="mr-2 size-7"><FitIcon /></IconButton>
      <IconButton label="Zoom out" className="mr-[10px] size-7"><Magnifier mark="M7 10.500h8" color="#8fa4c4" /></IconButton>
      <span className="relative mr-3 flex h-7 w-[155px] items-center">
        <input
          type="range"
          aria-label="Zoom level"
          className="h-px w-full appearance-none bg-[#555] [&::-webkit-slider-thumb]:size-4 [&::-webkit-slider-thumb]:appearance-none [&::-webkit-slider-thumb]:bg-transparent"
        />
        <Svg className="pointer-events-none absolute top-[3px] left-[70px] h-[26px] w-4" box="0 0 16 26">
          <path d="M0.500 0.500h15v17l-7.500 8-7.500-8z" fill="#e6e6e6" stroke="#666" />
        </Svg>
      </span>
      <IconButton label="Zoom in" className="size-7"><Magnifier mark="M7 10.500h8M11 6.500v8" color="#8fa4c4" /></IconButton>
    </footer>
  );
}

/* ---------- page ---------- */

const note = "absolute font-['Lato',sans-serif] leading-none whitespace-nowrap text-[#ff0000]";

export default function App() {
  return (
    <div className="relative flex h-screen flex-col overflow-hidden bg-[#cfcfcf] font-['Open_Sans','Noto_Sans',sans-serif] text-[20px] leading-7 text-black">
      <Header />
      <main className="relative flex flex-1 items-center justify-center">
        <div className="h-[600px] w-[800px] bg-white outline outline-[#c3c3c3]" />

        <p className={`${note} top-3 left-[232px] text-[44px]`}>Current Tool Features</p>
        <p className={`${note} top-[175px] left-[148px] text-[87px]`}>Toolbox</p>
        <p className={`${note} top-12 right-[357px] text-[87px]`}>Edit History</p>
        <p className={`${note} right-[347px] bottom-[545px] text-[87px]`}>Layers</p>
        <p className={`${note} bottom-[337px] left-[474px] text-[87px]`}>Color Palette</p>

        <ToolboxPanel />
        <ColorsPanel />
        <HistoryPanel />
        <LayersPanel />
      </main>
      <StatusBar />

      <div className="absolute top-[65px] right-[67px] h-6 w-[160px] border-6 border-t-0 border-[#ff0000]" />
      <p className={`${note} top-[95px] right-[43px] z-20 text-[31px]`}>Toolbox/History</p>
      <p className={`${note} top-[126px] right-[81px] z-20 text-[31px]`}>Color/Layers</p>
    </div>
  );
}
